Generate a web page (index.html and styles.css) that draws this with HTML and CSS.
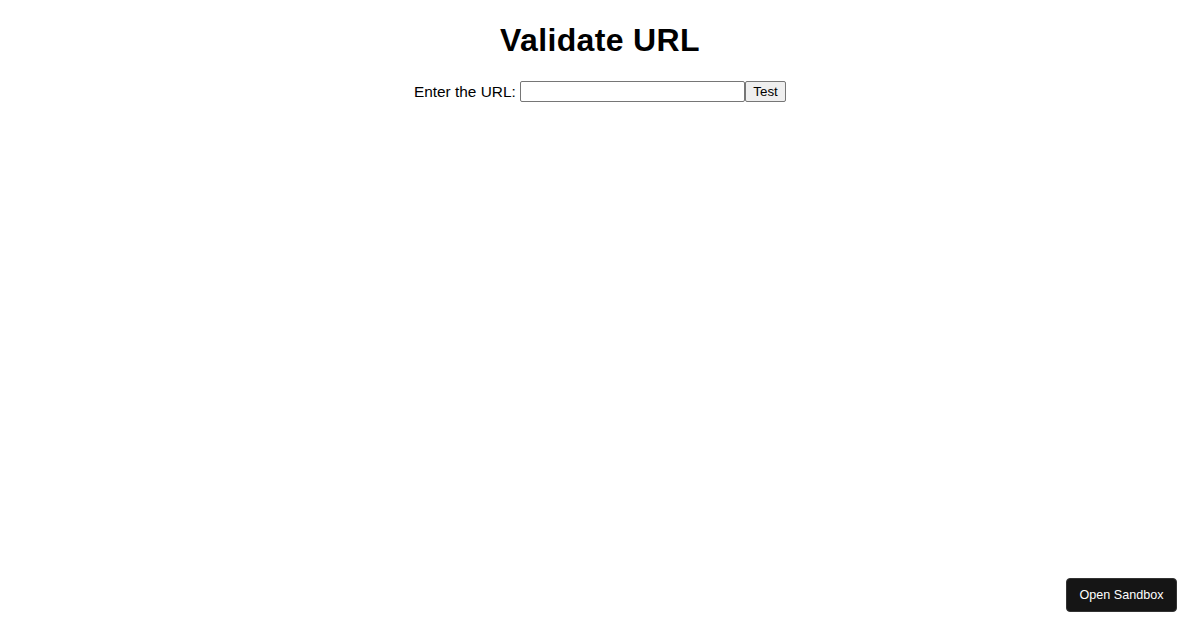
FILE: index.html
```html
<!DOCTYPE html>
<html>
<head>
<meta charset="utf-8">
<link rel="stylesheet" href="styles.css">
</head>
<body>
<h1 class="title">Validate URL</h1>
<div class="row">
<label class="label" for="url">Enter the URL:</label>
<input class="url-input" id="url" type="text"><button class="test-btn">Test</button>
</div>
<button class="sandbox-btn">Open Sandbox</button>
</body>
</html>
```
FILE: styles.css
```css
body {
  font-family: "Liberation Sans", Arial, sans-serif;
  text-align: center;
  color: #000;
  background: #fff;
}
.title {
  font-size: 32px;
  font-weight: bold;
  letter-spacing: 0.35px;
  margin: 14px 0 22px;
}
.row {
  font-size: 15.4px;
}
.url-input {
  width: 225px;
  height: 21px;
  box-sizing: border-box;
  border: 1px solid #767676;
  border-radius: 2px;
  padding: 1px 2px;
  font-family: "Liberation Sans", Arial, sans-serif;
  font-size: 13.33px;
  vertical-align: middle;
}
.test-btn {
  height: 21px;
  width: 41px;
  box-sizing: border-box;
  font-family: "Liberation Sans", Arial, sans-serif;
  font-size: 13.33px;
  border: 1px solid #767676;
  border-radius: 2px;
  background: #efefef;
  padding: 1px 6px;
  vertical-align: middle;
}
.label {
  vertical-align: middle;
}
.sandbox-btn {
  position: fixed;
  right: 23px;
  bottom: 18px;
  width: 111px;
  height: 34px;
  background: #151515;
  color: #fff;
  border: 1px solid #333;
  border-radius: 4px;
  font-family: "Liberation Sans", Arial, sans-serif;
  font-size: 12.6px;
  padding: 0;
}
```
